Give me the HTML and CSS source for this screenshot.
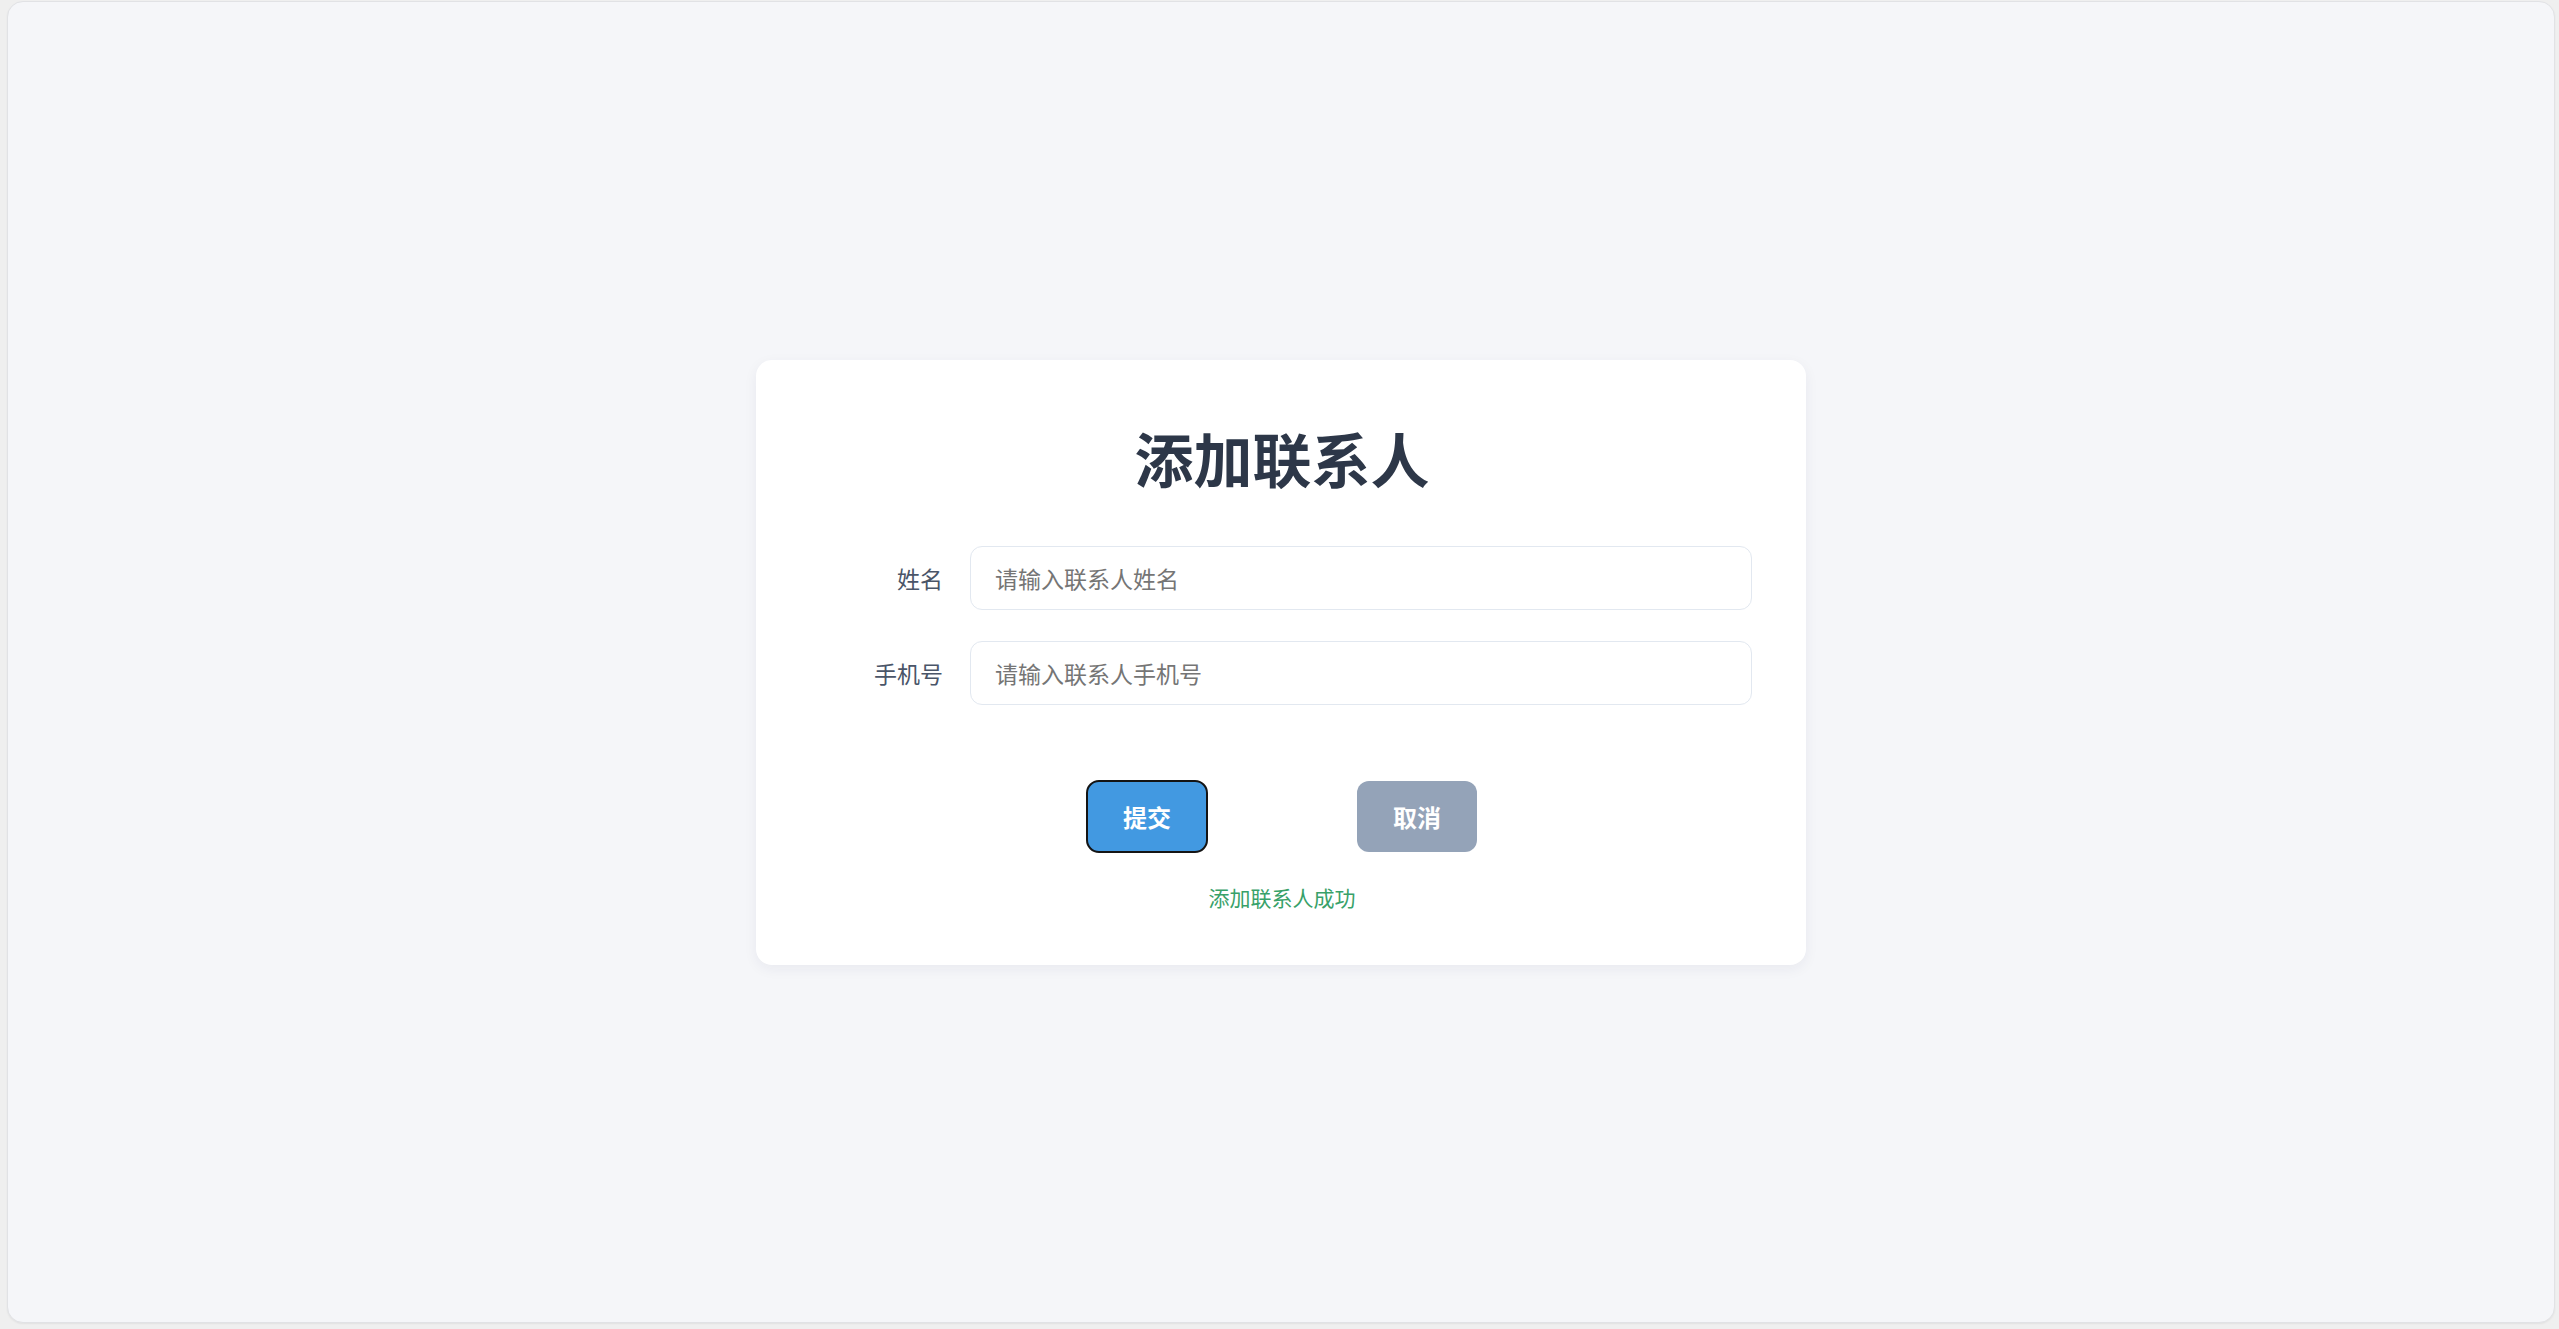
FILE: index.html
```html
<!DOCTYPE html>
<html lang="zh-CN">
<head>
<meta charset="utf-8">
<title>添加联系人</title>
<link rel="stylesheet" href="styles.css">
</head>
<body>
<div class="frame">
  <div class="card">
    <h1 class="title">添加联系人</h1>
    <form class="form">
      <div class="row">
        <label class="label" for="name">姓名</label>
        <input class="input" id="name" type="text" placeholder="请输入联系人姓名">
      </div>
      <div class="row">
        <label class="label" for="phone">手机号</label>
        <input class="input" id="phone" type="text" placeholder="请输入联系人手机号">
      </div>
      <div class="actions">
        <button type="button" class="btn btn-primary">提交</button>
        <button type="button" class="btn btn-cancel">取消</button>
      </div>
      <p class="message">添加联系人成功</p>
    </form>
  </div>
</div>
</body>
</html>
```

FILE: styles.css
```css
html, body {
  margin: 0;
  padding: 0;
  height: 100%;
}
body {
  background: #efefef;
  font-family: "Noto Sans CJK SC", "Noto Sans", sans-serif;
  box-sizing: border-box;
  padding: 1px 4px 6px 7px;
}
.frame {
  box-sizing: border-box;
  height: 100%;
  border: 1px solid #e1e2e5;
  border-radius: 16px;
  background: #f5f6f9;
  box-shadow: 0 1px 2px rgba(0,0,0,0.06);
  display: flex;
  align-items: center;
  justify-content: center;
}
.card {
  box-sizing: border-box;
  width: 1050px;
  background: #ffffff;
  border-radius: 16px;
  box-shadow: 0 4px 14px rgba(30, 40, 80, 0.06);
  padding: 57px 54px 52px 56px;
}
.title {
  margin: 0 0 47px 0;
  text-align: center;
  font-size: 59px;
  line-height: 82px;
  font-weight: 700;
  color: #2d3748;
}
.form {
  margin: 0;
  display: flex;
  flex-direction: column;
}
.row {
  display: flex;
  align-items: center;
  gap: 27px;
  margin-bottom: 31px;
}
.row:last-of-type {
  margin-bottom: 0;
}
.label {
  width: 131px;
  flex: none;
  text-align: right;
  font-size: 23px;
  color: #4a5568;
}
.input {
  flex: 1;
  box-sizing: border-box;
  height: 64px;
  border: 1px solid #e2e8f0;
  border-radius: 12px;
  padding: 0 24px;
  font-size: 23px;
  font-family: "Noto Sans CJK SC", "Noto Sans", sans-serif;
  color: #2d3748;
  background: #fff;
  outline: none;
}
.input::placeholder {
  color: #757575;
}
.actions {
  display: flex;
  justify-content: center;
  align-items: center;
  gap: 150px;
  margin-top: 45px;
}
.btn {
  box-sizing: border-box;
  width: 120px;
  height: 71px;
  border: none;
  border-radius: 12px;
  font-size: 24px;
  font-weight: 700;
  color: #ffffff;
  font-family: "Noto Sans CJK SC", "Noto Sans", sans-serif;
  cursor: pointer;
}
.btn-primary {
  background: #4299e1;
  outline: 2px solid #141414;
  outline-offset: -1px;
}
.btn-cancel {
  background: #94a3b8;
}
.message {
  margin: 30px 0 0 0;
  text-align: center;
  font-size: 21px;
  line-height: 31px;
  color: #38a169;
}
```
